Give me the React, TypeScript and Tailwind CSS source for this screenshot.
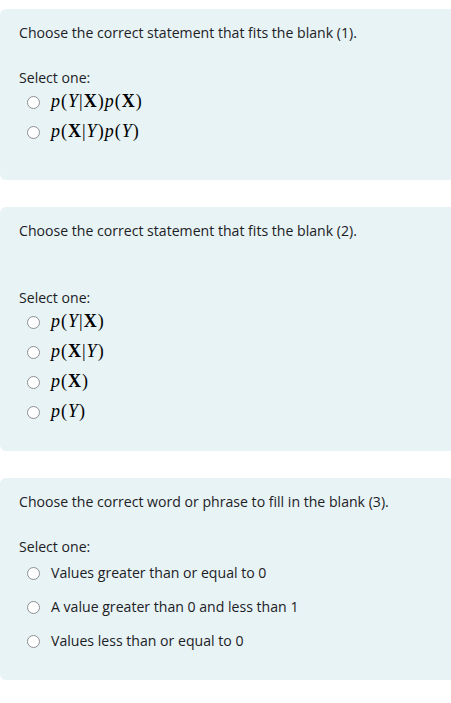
import React from 'react';

type Opt = React.ReactNode;

const It = ({ children }: { children: React.ReactNode }) => <span className="italic">{children}</span>;
const Bf = ({ children }: { children: React.ReactNode }) => <span className="font-bold">{children}</span>;

// little helper for the math bits, roughly KaTeX-looking
const M = ({ children }: { children: React.ReactNode }) => (
  <span className="font-['Liberation_Serif',serif] text-[18px] leading-none tracking-[1px] text-black">{children}</span>
);

const pYgX = (
  <M><It>p</It>(<It>Y</It>|<Bf>X</Bf>)</M>
);
const pXgY = (
  <M><It>p</It>(<Bf>X</Bf>|<It>Y</It>)</M>
);
const pX = (
  <M><It>p</It>(<Bf>X</Bf>)</M>
);
const pY = (
  <M><It>p</It>(<It>Y</It>)</M>
);

const Radio = () => (
  <span className="w-[13px] h-[13px] rounded-full border border-[#8d8f93] bg-white shrink-0" />
);

interface QuestionProps {
  text: string;
  selectMt: string;
  rowH: string;
  pb: string;
  options: Opt[];
  className?: string;
}

const Question: React.FC<QuestionProps> = ({ text, selectMt, rowH, pb, options, className }) => (
  <div className={`bg-[#e7f3f5] rounded-l-[6px] ${pb} ${className ?? ''}`}>
    <div className="h-[48px] flex items-center pl-[19px]">{text}</div>
    <div className={`h-[18px] flex items-center pl-[19px] ${selectMt}`}>Select one:</div>
    <div className="flex flex-col">
      {options.map((o, i) => (
        <div key={i} className={`${rowH} flex items-center pl-[27px] gap-[11px]`}>
          <Radio />
          <span>{o}</span>
        </div>
      ))}
    </div>
  </div>
);

export default function App() {
  return (
    <div className="w-[451px] min-h-[703px] bg-white overflow-hidden font-['Open_Sans',sans-serif] text-[14.1px] text-[#1d2125] pt-[9px]">
      <Question
        text="Choose the correct statement that fits the blank (1)."
        selectMt="mt-[12px]"
        rowH="h-[30px]"
        pb="pb-[33px]"
        options={[
          <M><It>p</It>(<It>Y</It>|<Bf>X</Bf>)<It>p</It>(<Bf>X</Bf>)</M>,
          <M><It>p</It>(<Bf>X</Bf>|<It>Y</It>)<It>p</It>(<It>Y</It>)</M>,
        ]}
      />
      <Question
        className="mt-[27px]"
        text="Choose the correct statement that fits the blank (2)."
        selectMt="mt-[34px]"
        rowH="h-[30px]"
        pb="pb-[24px]"
        options={[pYgX, pXgY, pX, pY]}
      />
      <Question
        className="mt-[27px]"
        text="Choose the correct word or phrase to fill in the blank (3)."
        selectMt="mt-[12px]"
        rowH="h-[34px]"
        pb="pb-[22px]"
        options={[
          'Values greater than or equal to 0',
          'A value greater than 0 and less than 1',
          'Values less than or equal to 0',
        ]}
      />
    </div>
  );
}
